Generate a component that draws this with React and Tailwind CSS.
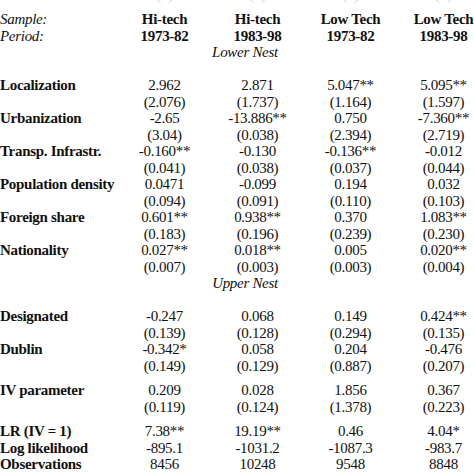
import React from "react";

const rows = [
  ["Localization", ["2.962", "2.871", "5.047**", "5.095**"], ["(2.076)", "(1.737)", "(1.164)", "(1.597)"]],
  ["Urbanization", ["-2.65", "-13.886**", "0.750", "-7.360**"], ["(3.04)", "(0.038)", "(2.394)", "(2.719)"]],
  ["Transp. Infrastr.", ["-0.160**", "-0.130", "-0.136**", "-0.012"], ["(0.041)", "(0.038)", "(0.037)", "(0.044)"]],
  ["Population density", ["0.0471", "-0.099", "0.194", "0.032"], ["(0.094)", "(0.091)", "(0.110)", "(0.103)"]],
  ["Foreign share", ["0.601**", "0.938**", "0.370", "1.083**"], ["(0.183)", "(0.196)", "(0.239)", "(0.230)"]],
  ["Nationality", ["0.027**", "0.018**", "0.005", "0.020**"], ["(0.007)", "(0.003)", "(0.003)", "(0.004)"]],
];

const upper = [
  ["Designated", ["-0.247", "0.068", "0.149", "0.424**"], ["(0.139)", "(0.128)", "(0.294)", "(0.135)"]],
  ["Dublin", ["-0.342*", "0.058", "0.204", "-0.476"], ["(0.149)", "(0.129)", "(0.887)", "(0.207)"]],
];

function Line({ label, vals, italic, boldVals, className = "" }) {
  return (
    <div className={"grid grid-cols-[118px_93px_93px_93px_93px] h-[16.5px] leading-[16.5px] " + className}>
      <div className={italic ? "italic whitespace-nowrap" : "font-bold whitespace-nowrap"}>{label}</div>
      {vals.map((v, i) => (
        <div key={i} className={"text-center whitespace-nowrap " + (boldVals ? "font-bold" : "")}>
          {v}
        </div>
      ))}
    </div>
  );
}

function Section({ title }) {
  return (
    <div className="h-[16.5px] leading-[16.5px] text-center italic w-[490px]">{title}</div>
  );
}

function Block({ data }) {
  return data.map(([label, a, b]) => (
    <React.Fragment key={label}>
      <Line label={label} vals={a} />
      <Line label="" vals={b} />
    </React.Fragment>
  ));
}

export default function App() {
  return (
    <div className="w-[474px] h-[474px] overflow-hidden bg-white text-[#111]">
      <div
        className="w-[490px] text-[15px] tracking-[-0.3px]"
        style={{ fontFamily: '"Liberation Serif", "Times New Roman", serif' }}
      >
        <div className="h-[11.25px] overflow-hidden">
          <div className="mt-[-13px] text-[#d8d8d8]">
            <Line label="" vals={["(1)", "(2)", "(3)", "(4)"]} />
          </div>
        </div>
        <Line label="Sample:" italic boldVals vals={["Hi-tech", "Hi-tech", "Low Tech", "Low Tech"]} />
        <Line label="Period:" italic boldVals vals={["1973-82", "1983-98", "1973-82", "1983-98"]} />
        <Section title="Lower Nest" />
        <div className="h-[16.5px]" />
        <Block data={rows} />
        <Section title="Upper Nest" />
        <div className="h-[16.5px]" />
        <Block data={upper} />
        <div className="h-[8px]" />
        <Line label="IV parameter" vals={["0.209", "0.028", "1.856", "0.367"]} />
        <Line label="" vals={["(0.119)", "(0.124)", "(1.378)", "(0.223)"]} />
        <div className="h-[8px]" />
        <Line label="LR (IV = 1)" vals={["7.38**", "19.19**", "0.46", "4.04*"]} />
        <Line label="Log likelihood" vals={["-895.1", "-1031.2", "-1087.3", "-983.7"]} />
        <Line label="Observations" vals={["8456", "10248", "9548", "8848"]} />
      </div>
    </div>
  );
}
